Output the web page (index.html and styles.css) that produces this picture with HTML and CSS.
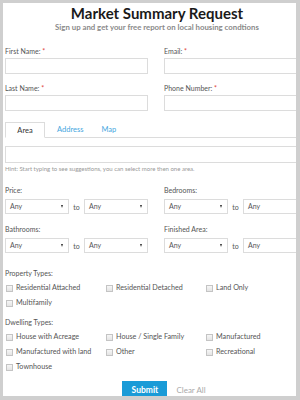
FILE: index.html
```html
<!DOCTYPE html>
<html lang="en">
<head>
    <meta charset="UTF-8">
    <meta name="viewport" content="width=device-width, initial-scale=1.0">
    <title>Market Summary Request</title>
    <link rel="stylesheet" href="styles.css">
</head>
<body>
    <div class="frame">
        <div class="form">
            <header>
                <h1>Market Summary Request</h1>
                <div class="subtitle">Sign up and get your free report on local housing condtions</div>
            </header>

            <!-- Contato -->
            <div class="row first">
                <div class="field">
                    <label>First Name: <span class="req">*</span></label>
                    <div class="input"></div>
                </div>
                <div class="field">
                    <label>Email: <span class="req">*</span></label>
                    <div class="input"></div>
                </div>
            </div>
            <div class="row second">
                <div class="field">
                    <label>Last Name: <span class="req">*</span></label>
                    <div class="input"></div>
                </div>
                <div class="field">
                    <label>Phone Number: <span class="req">*</span></label>
                    <div class="input"></div>
                </div>
            </div>

            <!-- Abas -->
            <div class="tabs">
                <div class="tab active">Area</div>
                <div class="tab">Address</div>
                <div class="tab">Map</div>
            </div>
            <div class="input area-input"></div>
            <div class="hint">Hint: Start typing to see suggestions, you can select more then one area.</div>

            <!-- Faixas -->
            <div class="row ranges">
                <div class="field">
                    <label>Price:</label>
                    <div class="range">
                        <div class="select">Any<span class="caret"></span></div>
                        <span class="to">to</span>
                        <div class="select">Any<span class="caret"></span></div>
                    </div>
                </div>
                <div class="field">
                    <label>Bedrooms:</label>
                    <div class="range">
                        <div class="select">Any<span class="caret"></span></div>
                        <span class="to">to</span>
                        <div class="select">Any<span class="caret"></span></div>
                    </div>
                </div>
            </div>
            <div class="row ranges">
                <div class="field">
                    <label>Bathrooms:</label>
                    <div class="range">
                        <div class="select">Any<span class="caret"></span></div>
                        <span class="to">to</span>
                        <div class="select">Any<span class="caret"></span></div>
                    </div>
                </div>
                <div class="field">
                    <label>Finished Area:</label>
                    <div class="range">
                        <div class="select">Any<span class="caret"></span></div>
                        <span class="to">to</span>
                        <div class="select">Any<span class="caret"></span></div>
                    </div>
                </div>
            </div>

            <!-- Tipos -->
            <div class="group">
                <div class="group-label">Property Types:</div>
                <div class="checks">
                    <div class="check"><span class="box"></span>Residential Attached</div>
                    <div class="check"><span class="box"></span>Residential Detached</div>
                    <div class="check"><span class="box"></span>Land Only</div>
                    <div class="check"><span class="box"></span>Multifamily</div>
                </div>
            </div>
            <div class="group">
                <div class="group-label">Dwelling Types:</div>
                <div class="checks">
                    <div class="check"><span class="box"></span>House with Acreage</div>
                    <div class="check"><span class="box"></span>House / Single Family</div>
                    <div class="check"><span class="box"></span>Manufactured</div>
                    <div class="check"><span class="box"></span>Manufactured with land</div>
                    <div class="check"><span class="box"></span>Other</div>
                    <div class="check"><span class="box"></span>Recreational</div>
                    <div class="check"><span class="box"></span>Townhouse</div>
                </div>
            </div>

            <div class="actions">
                <button class="btn-submit">Submit</button>
                <span class="clear">Clear All</span>
            </div>
        </div>
    </div>
</body>
</html>
```

FILE: styles.css
```css
:root {
    --blue: #1a9bd7;
    --link: #45a7e0;
    --border: #dcdcdc;
    --text: #555;
    --muted: #8a8a8a;
    --red: #e0403a;
}

* {
    box-sizing: border-box;
    margin: 0;
    padding: 0;
    font-family: Lato, 'Open Sans', Arial, sans-serif;
}

body {
    background-color: #cfcfcf;
    padding: 3px 4px 4px 3px;
    height: 400px;
    overflow: hidden;
    color: var(--text);
}

.frame {
    background: white;
    height: 393px;
    overflow: hidden;
}

.form {
    width: 308px;
    padding: 0 2px;
}

header {
    text-align: center;
    padding-top: 2px;
}

h1 {
    font-size: 15px;
    line-height: 17px;
    color: #1a1a1a;
    font-weight: bold;
}

.subtitle {
    font-size: 7.8px;
    line-height: 10px;
    font-weight: bold;
    color: var(--muted);
}

/* Linhas de duas colunas */
.row {
    display: grid;
    grid-template-columns: 143px 143px;
    column-gap: 16px;
}

.row.first {
    margin-top: 14px;
}

.row.second {
    margin-top: 9px;
}

.field label {
    display: block;
    font-size: 7px;
    line-height: 11px;
    color: var(--text);
}

.req {
    color: var(--red);
}

.input {
    height: 16px;
    border: 1px solid var(--border);
    margin-top: 1px;
}

/* Abas */
.tabs {
    display: flex;
    margin-top: 11px;
    border-bottom: 1px solid var(--border);
    height: 16px;
}

.tab {
    font-size: 7.5px;
    line-height: 15px;
    color: var(--link);
    padding: 0 9px;
}

.tab.active {
    color: #333;
    width: 40px;
    text-align: center;
    border: 1px solid var(--border);
    border-bottom: 1px solid white;
    padding: 0;
    height: 16px;
    margin-right: 3px;
}

.area-input {
    margin-top: 8px;
    height: 17px;
    width: 310px;
}

.hint {
    font-size: 6px;
    line-height: 8px;
    color: #999;
    margin-top: 2px;
}

/* Faixas */
.row.ranges {
    margin-top: 12px;
}

.row.ranges + .row.ranges {
    margin-top: 10px;
}

.range {
    display: flex;
    align-items: center;
    margin-top: 3px;
}

.select {
    position: relative;
    width: 64px;
    height: 15px;
    border: 1px solid var(--border);
    font-size: 7px;
    line-height: 13px;
    padding-left: 4px;
    color: var(--text);
}

.caret {
    position: absolute;
    right: 5px;
    top: 5px;
    border-left: 1.5px solid transparent;
    border-right: 1.5px solid transparent;
    border-top: 3px solid #333;
}

.to {
    font-size: 7px;
    color: var(--text);
    width: 15px;
    text-align: center;
}

/* Tipos */
.group {
    margin-top: 15px;
}

.group + .group {
    margin-top: 8px;
}

.group-label {
    font-size: 7px;
    line-height: 11px;
    color: var(--text);
}

.checks {
    display: grid;
    grid-template-columns: 100px 100px 100px;
    row-gap: 3px;
    margin-top: 3px;
}

.check {
    display: flex;
    align-items: center;
    font-size: 7.2px;
    line-height: 12px;
    color: var(--text);
}

.box {
    width: 7px;
    height: 7px;
    border: 1px solid #c4c4c4;
    background: linear-gradient(#f6f6f6, #e4e4e4);
    margin: 0 3px 0 1px;
}

.actions {
    display: flex;
    justify-content: center;
    align-items: center;
    gap: 9px;
    margin-top: 8px;
    padding-left: 14px;
}

.btn-submit {
    background: var(--blue);
    color: white;
    border: none;
    font-size: 8.5px;
    font-weight: bold;
    height: 18px;
    width: 45px;
}

.clear {
    font-size: 8px;
    color: #aaa;
}
```
